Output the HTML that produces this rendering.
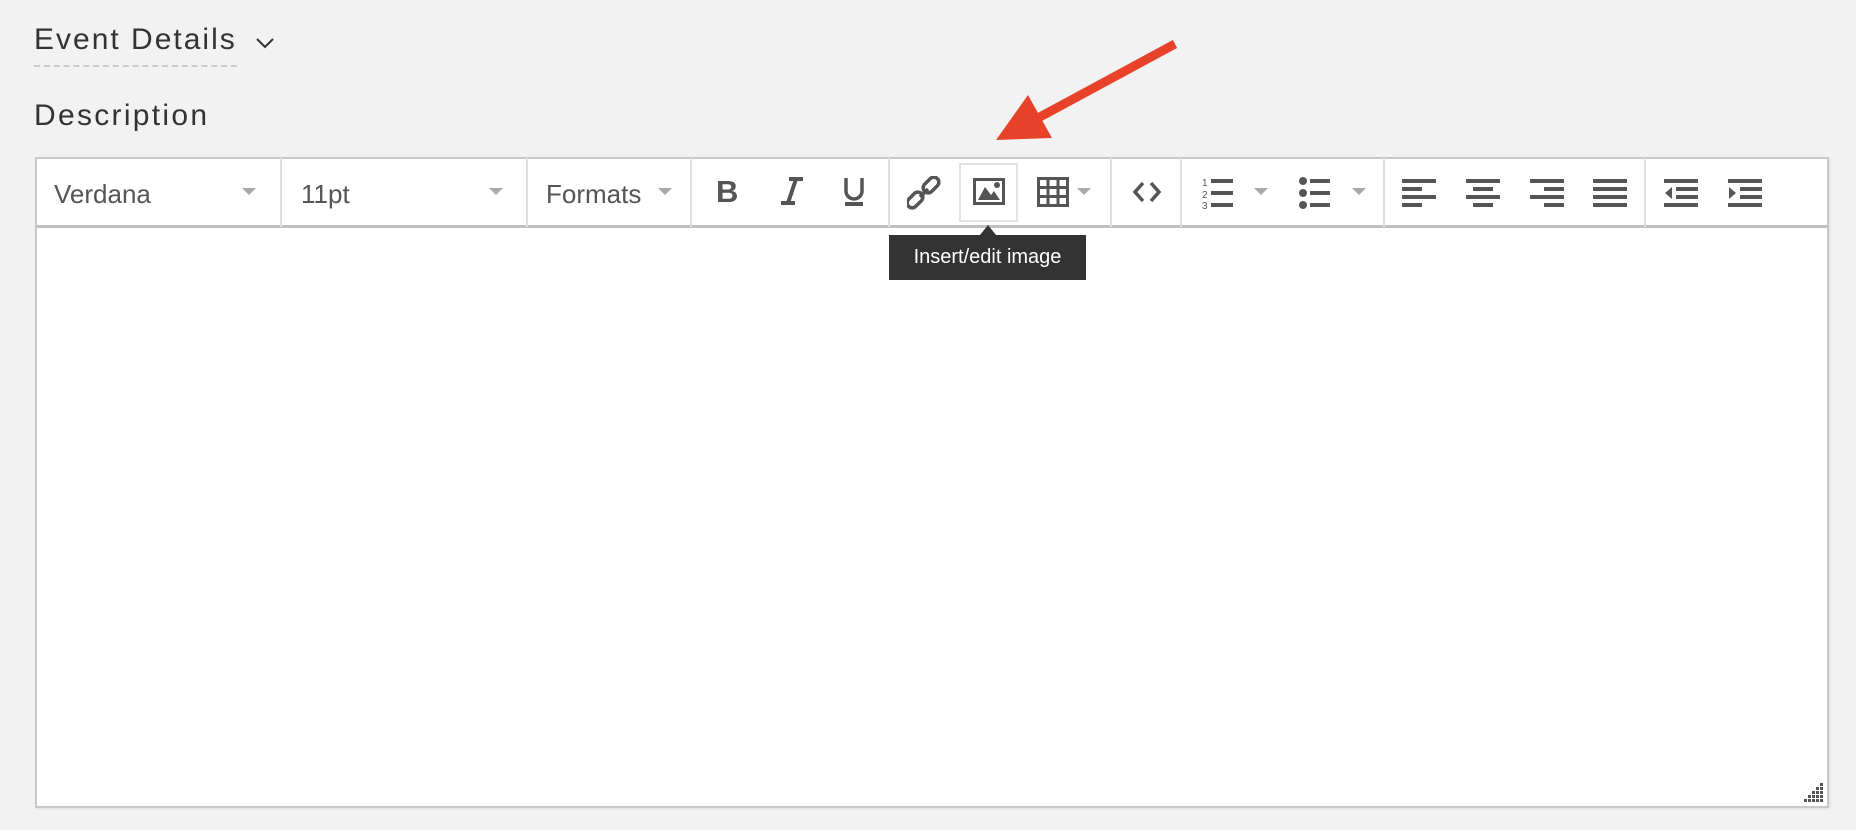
<!DOCTYPE html>
<html><head><meta charset="utf-8"><style>
*{margin:0;padding:0;box-sizing:border-box}
body{width:1856px;height:830px;background:#f2f2f2;font-family:"Liberation Sans",sans-serif;position:relative;overflow:hidden}
.abs{position:absolute}
.t{color:#333;font-size:30px;letter-spacing:2px;white-space:nowrap}
.sel{font-size:26px;color:#555;top:179px}
.sep{position:absolute;top:158px;width:2px;height:69px;background:#e0e0e0}
.dd{position:absolute;top:188px;width:0;height:0;border-left:7px solid transparent;border-right:7px solid transparent;border-top:7px solid #aaa}
svg.i{position:absolute;top:175px}
</style></head><body>
<div class="abs t" style="left:34px;top:23px">Event Details</div>
<svg class="abs" style="left:255px;top:36px" width="20" height="14"><path d="M2 3 L10 11 L18 3" fill="none" stroke="#333" stroke-width="2"/></svg>
<div class="abs" style="left:34px;top:65px;width:203px;border-top:2px dashed #ccc"></div>
<div class="abs t" style="left:34px;top:99px;letter-spacing:2.3px">Description</div>

<div class="abs" style="left:35px;top:157px;width:1794px;height:651px;background:#fff;border:2px solid #c8c8c8;box-shadow:1px 1px 2px #ddd"></div>
<div class="abs" style="left:37px;top:225px;width:1790px;height:3px;background:#c0c0c0"></div>

<div class="abs sel" style="left:54px">Verdana</div>
<div class="dd" style="left:242px"></div>
<div class="sep" style="left:280px"></div>
<div class="abs sel" style="left:301px">11pt</div>
<div class="dd" style="left:489px"></div>
<div class="sep" style="left:526px"></div>
<div class="abs sel" style="left:546px">Formats</div>
<div class="dd" style="left:658px"></div>
<div class="sep" style="left:690px"></div>

<div class="abs" style="left:716px;top:174px;font-size:31px;font-weight:bold;color:#555">B</div>
<svg class="i" style="left:777px" width="28" height="34"><path d="M4 28 L18 28 M12 4 L26 4 M19 4 L11 28" stroke="#555" stroke-width="4" fill="none"/></svg>
<svg class="i" style="left:840px" width="28" height="34"><path d="M6 3 V16 A8 8 0 0 0 22 16 V3" stroke="#555" stroke-width="3.5" fill="none"/><rect x="5" y="27" width="18" height="4" fill="#555"/></svg>
<div class="sep" style="left:888px"></div>

<svg class="i" style="left:907px;top:176px" width="34" height="34"><g fill="none" stroke="#555" stroke-width="3.5"><rect x="3" y="15" width="10" height="18" rx="5" transform="rotate(45 8 24)"/><rect x="19" y="0" width="10" height="18" rx="5" transform="rotate(45 24 9)"/><path d="M13 21 L21 13"/></g></svg>
<div class="abs" style="left:959px;top:163px;width:59px;height:59px;border:2px solid #e3e3e3"></div>
<svg class="i" style="left:973px;top:178px" width="32" height="28"><rect x="1.5" y="1.5" width="29" height="24" fill="none" stroke="#555" stroke-width="3"/><path d="M5 22 L12 9 L18 17 L21 13 L27 22 Z" fill="#555"/><circle cx="24" cy="7" r="3" fill="#555"/></svg>
<svg class="i" style="left:1037px;top:177px" width="32" height="30"><g fill="none" stroke="#555" stroke-width="3"><rect x="1.5" y="1.5" width="29" height="27"/><path d="M1.5 10.5H30.5M1.5 19.5H30.5M11 1.5V28.5M21 1.5V28.5"/></g></svg>
<div class="dd" style="left:1077px"></div>
<div class="sep" style="left:1110px"></div>
<svg class="i" style="left:1132px;top:180px" width="30" height="24"><path d="M11 3 L3 12 L11 21 M19 3 L27 12 L19 21" stroke="#555" stroke-width="3.5" fill="none"/></svg>
<div class="sep" style="left:1180px"></div>
<svg class="i" style="left:1201px;top:176px" width="34" height="34"><g fill="#555"><rect x="10" y="3" width="22" height="4"/><rect x="10" y="15" width="22" height="4"/><rect x="10" y="27" width="22" height="4"/></g><text x="1" y="10" font-size="10" fill="#555" font-family="Liberation Sans">1</text><text x="1" y="22" font-size="10" fill="#555" font-family="Liberation Sans">2</text><text x="1" y="33" font-size="10" fill="#555" font-family="Liberation Sans">3</text></svg>
<div class="dd" style="left:1254px"></div>
<svg class="i" style="left:1298px;top:176px" width="34" height="34"><g fill="#555"><ellipse cx="5" cy="5" rx="4" ry="4"/><ellipse cx="5" cy="17" rx="4" ry="4"/><ellipse cx="5" cy="29" rx="4" ry="4"/><rect x="12" y="3" width="20" height="4"/><rect x="12" y="15" width="20" height="4"/><rect x="12" y="27" width="20" height="4"/></g></svg>
<div class="dd" style="left:1352px"></div>
<div class="sep" style="left:1383px"></div>
<svg class="i" style="left:1402px;top:176px" width="34" height="34"><g fill="#555"><rect x="0" y="3" width="34" height="4"/><rect x="0" y="11" width="20" height="4"/><rect x="0" y="19" width="34" height="4"/><rect x="0" y="27" width="20" height="4"/></g></svg>
<svg class="i" style="left:1466px;top:176px" width="34" height="34"><g fill="#555"><rect x="0" y="3" width="34" height="4"/><rect x="7" y="11" width="20" height="4"/><rect x="0" y="19" width="34" height="4"/><rect x="7" y="27" width="20" height="4"/></g></svg>
<svg class="i" style="left:1530px;top:176px" width="34" height="34"><g fill="#555"><rect x="0" y="3" width="34" height="4"/><rect x="14" y="11" width="20" height="4"/><rect x="0" y="19" width="34" height="4"/><rect x="14" y="27" width="20" height="4"/></g></svg>
<svg class="i" style="left:1593px;top:176px" width="34" height="34"><g fill="#555"><rect x="0" y="3" width="34" height="4"/><rect x="0" y="11" width="34" height="4"/><rect x="0" y="19" width="34" height="4"/><rect x="0" y="27" width="34" height="4"/></g></svg>
<div class="sep" style="left:1644px"></div>
<svg class="i" style="left:1664px;top:176px" width="34" height="34"><g fill="#555"><rect x="0" y="3" width="34" height="4"/><rect x="12" y="11" width="22" height="4"/><rect x="12" y="19" width="22" height="4"/><rect x="0" y="27" width="34" height="4"/><path d="M8 11 L1 17 L8 23Z"/></g></svg>
<svg class="i" style="left:1728px;top:176px" width="34" height="34"><g fill="#555"><rect x="0" y="3" width="34" height="4"/><rect x="12" y="11" width="22" height="4"/><rect x="12" y="19" width="22" height="4"/><rect x="0" y="27" width="34" height="4"/><path d="M1 11 L8 17 L1 23Z"/></g></svg>

<div class="abs" style="left:980px;top:225px;width:0;height:0;border-left:8px solid transparent;border-right:8px solid transparent;border-bottom:10px solid #333"></div>
<div class="abs" style="left:889px;top:235px;width:197px;height:45px;background:#333;color:#fff;font-size:20px;line-height:45px;text-align:center">Insert/edit image</div>

<svg class="abs" style="left:0;top:0" width="1856" height="830"><path d="M1175 44 L1038 118" stroke="#e8432a" stroke-width="9"/><path d="M1028 95 L1052 138 L996 140 Z" fill="#e8432a"/>
<g fill="#555"><rect x="1820" y="783" width="3" height="3"/><rect x="1816" y="787" width="3" height="3"/><rect x="1820" y="787" width="3" height="3"/><rect x="1812" y="791" width="3" height="3"/><rect x="1816" y="791" width="3" height="3"/><rect x="1820" y="791" width="3" height="3"/><rect x="1808" y="795" width="3" height="3"/><rect x="1812" y="795" width="3" height="3"/><rect x="1816" y="795" width="3" height="3"/><rect x="1820" y="795" width="3" height="3"/><rect x="1804" y="799" width="3" height="3"/><rect x="1808" y="799" width="3" height="3"/><rect x="1812" y="799" width="3" height="3"/><rect x="1816" y="799" width="3" height="3"/><rect x="1820" y="799" width="3" height="3"/></g></svg>
</body></html>
